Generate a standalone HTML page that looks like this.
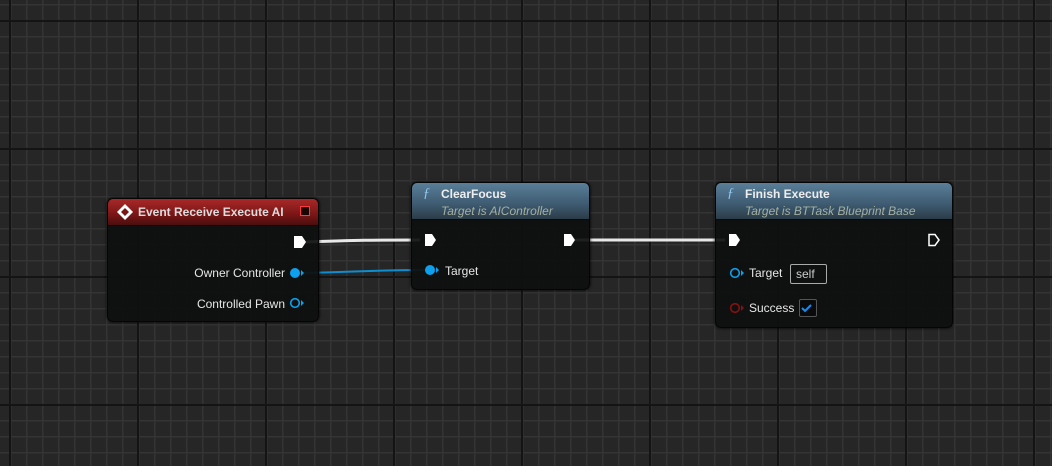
<!DOCTYPE html><html><head><style>
body{margin:0;width:1052px;height:466px;overflow:hidden;font-family:"Liberation Sans",sans-serif;
background-color:#262626;
background-image:
linear-gradient(90deg,#141414 0 2px,transparent 2px),
linear-gradient(0deg,transparent 0 126px,#141414 126px 128px),
linear-gradient(90deg,#343434 0 1.5px,transparent 1.5px),
linear-gradient(0deg,transparent 0 14.5px,#343434 14.5px 16px);
background-size:128px 128px,128px 128px,16px 16px,16px 16px;
background-position:9px 0,0 -108px,10px 0,0 -12px;position:relative}
.n{position:absolute;background:rgba(14,15,15,.93);border:1px solid #050505;border-radius:6px;box-shadow:0 0 3px #000;overflow:hidden}
.h{height:36px;background:linear-gradient(180deg,#5a7f98,#3d5a70 60%,#2c3c48);border-bottom:1px solid #0a0a0a;color:#eee;font-weight:bold;font-size:12px;position:relative}
.t{position:absolute;left:29px;top:4px}
.s{position:absolute;left:29px;top:21px;font-style:italic;font-weight:normal;color:#a4b0a2;font-size:12px}
.f{position:absolute;left:11px;top:3px;font-family:"Liberation Serif",serif;font-style:italic;color:#8ec8f0;font-size:14px;font-weight:normal}
.l{position:absolute;color:#e6e6e6;font-size:12px}
svg{position:absolute;left:0;top:0}
</style></head><body>
<svg width="1052" height="466">
<path d="M305 242 C360 240,370 240,420 240" stroke="#e8e8e8" stroke-width="3" fill="none"/>
<path d="M575 240 L725 240" stroke="#e8e8e8" stroke-width="3" fill="none"/>
<path d="M300 273 C360 272,370 270,425 270" stroke="#0c8ed0" stroke-width="2" fill="none"/>
</svg>
<div class="n" style="left:107px;top:198px;width:210px;height:122px">
<div style="height:26px;background:linear-gradient(180deg,#a82828,#7a1616 60%,#4a0e0e);color:#ddd;font-weight:bold;font-size:12px;position:relative;border-bottom:1px solid #0a0a0a">
<svg width="20" height="20" style="left:8px;top:4px"><path d="M9 1 L17 9 L9 17 L1 9Z" fill="#fff"/><path d="M9 5 L13 9 L9 13 L5 9Z" fill="#7a1616"/></svg>
<span style="position:absolute;left:30px;top:6px">Event Receive Execute AI</span>
<div style="position:absolute;left:192px;top:7px;width:8px;height:8px;border:1.5px solid #ff3a3a;background:#1a0505"></div></div>
<span class="l" style="right:33px;top:67px">Owner Controller</span>
<span class="l" style="right:33px;top:98px">Controlled Pawn</span>
</div>
<div class="n" style="left:411px;top:182px;width:177px;height:106px">
<div class="h"><span class="f">ƒ</span><span class="t">ClearFocus</span><span class="s">Target is AIController</span></div>
<span class="l" style="left:33px;top:81px">Target</span></div>
<div class="n" style="left:715px;top:182px;width:236px;height:144px">
<div class="h"><span class="f">ƒ</span><span class="t">Finish Execute</span><span class="s">Target is BTTask Blueprint Base</span></div>
<span class="l" style="left:33px;top:83px">Target</span>
<div style="position:absolute;left:74px;top:81px;width:35px;height:18px;border:1px solid #aaa;border-radius:2px;color:#ccc;font-size:12px;line-height:18px;text-indent:5px">self</div>
<span class="l" style="left:33px;top:118px">Success</span>
<div style="position:absolute;left:83px;top:116px;width:16px;height:16px;border:1px solid #555;border-radius:2px;background:#0a0a0a"></div>
</div>
<svg width="1052" height="466">
<g fill="#fff"><path d="M294 236h8l4 6-4 6h-8z"/><path d="M425 234h7l4 6-4 6h-7z"/><path d="M564 234h7l4 6-4 6h-7z"/><path d="M729 234h7l4 6-4 6h-7z"/></g>
<path d="M929 234.5h6l4 5.5-4 5.5h-6z" fill="none" stroke="#fff" stroke-width="1.5"/>
<circle cx="295" cy="273" r="5" fill="#0ca0ee"/><path d="M301 270l3 3-3 3z" fill="#0ca0ee"/>
<circle cx="295" cy="303" r="4.3" fill="none" stroke="#0ca0ee" stroke-width="1.6"/><path d="M301 300l3 3-3 3z" fill="#0ca0ee"/>
<circle cx="430" cy="270" r="5" fill="#0ca0ee"/><path d="M436 267l3 3-3 3z" fill="#0ca0ee"/>
<circle cx="735" cy="273" r="4.3" fill="none" stroke="#0ca0ee" stroke-width="1.6"/><path d="M741 270l3 3-3 3z" fill="#0ca0ee"/>
<circle cx="735" cy="308" r="4.3" fill="none" stroke="#8a1010" stroke-width="1.6"/><path d="M741 305l3 3-3 3z" fill="#8a1010"/>
<path d="M802 308l3 3 6-6" fill="none" stroke="#1a8cf0" stroke-width="2"/>
</svg>
</body></html>
